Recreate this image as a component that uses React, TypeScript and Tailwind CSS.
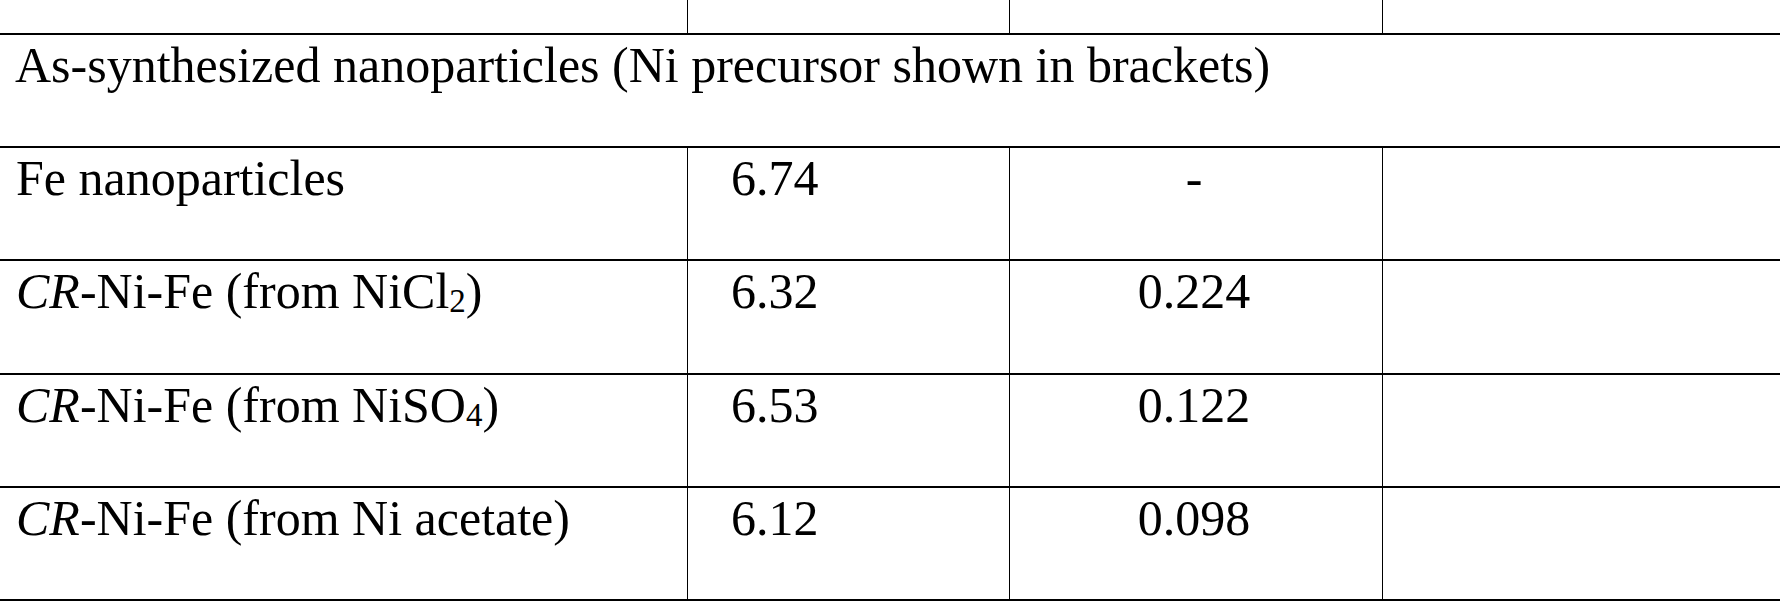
import React from 'react'

interface RowData {
    label: React.ReactNode;
    size: string;
    ratio: string;
    h: string;
}

const Sub: React.FC<{ children: React.ReactNode }> = ({ children }) => (
    <span className="relative top-[0.12em] text-[0.66em] leading-none">{children}</span>
)

const CR = () => <i>CR</i>

const rows: RowData[] = [
    { label: 'Fe nanoparticles', size: '6.74', ratio: '-', h: 'h-[113px]' },
    { label: <><CR />-Ni-Fe (from NiCl<Sub>2</Sub>)</>, size: '6.32', ratio: '0.224', h: 'h-[114px]' },
    { label: <><CR />-Ni-Fe (from NiSO<Sub>4</Sub>)</>, size: '6.53', ratio: '0.122', h: 'h-[113px]' },
    { label: <><CR />-Ni-Fe (from Ni acetate)</>, size: '6.12', ratio: '0.098', h: 'h-[113px]' },
]

const App: React.FC = () => {
    return (
        <div
            className="w-[1780px] h-[611px] bg-white text-black overflow-hidden text-[50px] leading-[1.15]"
            style={{ fontFamily: '"Liberation Serif", "Times New Roman", serif' }}
        >
            <div className="grid grid-cols-[688px_322px_373px_1fr]">
                {/* tail of the previous row */}
                <div className="h-[33px] border-r border-black" />
                <div className="h-[33px] border-r border-black" />
                <div className="h-[33px] border-r border-black" />
                <div className="h-[33px]" />

                <div className="col-span-4 h-[113px] border-t-2 border-black pl-[15px] pt-[2px]">
                    As-synthesized nanoparticles (Ni precursor shown in brackets)
                </div>

                {rows.map((r, i) => (
                    <React.Fragment key={i}>
                        <div className={`${r.h} border-t-2 border-r border-black pl-[16px] pt-[2px] whitespace-nowrap`}>
                            {r.label}
                        </div>
                        <div className={`${r.h} border-t-2 border-r border-black pl-[43px] pt-[2px]`}>
                            {r.size}
                        </div>
                        <div className={`${r.h} border-t-2 border-r border-black text-center pr-[4px] pt-[2px]`}>
                            {r.ratio}
                        </div>
                        <div className={`${r.h} border-t-2 border-black`} />
                    </React.Fragment>
                ))}

                <div className="col-span-4 border-t-2 border-black" />
            </div>
        </div>
    )
}

export default App
